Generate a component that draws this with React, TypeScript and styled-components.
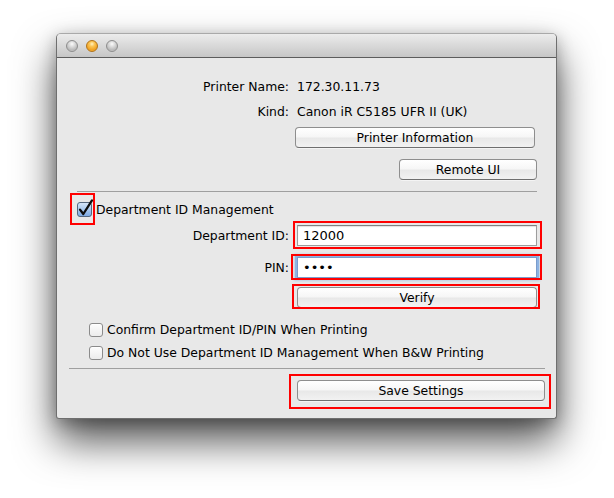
import React from 'react';
import styled, { createGlobalStyle, css } from 'styled-components';

const GlobalStyle = createGlobalStyle`
  html, body {
    margin: 0;
    background: #fff;
  }
  body {
    font-family: "DejaVu Sans", "Liberation Sans", sans-serif;
    font-size: 12.4px;
    color: #000;
  }
`;

const Page = styled.div`
  height: 498px;
  box-sizing: border-box;
  padding: 33px 0 0 56px;
  overflow: hidden;
`;

const Window = styled.div`
  width: 501px;
  height: 386px;
  box-sizing: border-box;
  border: 1px solid #6f6f6f;
  border-top-color: #a9a9a9;
  border-radius: 5px 5px 3px 3px;
  background: #e8e8e8;
  box-shadow: 0 22px 40px rgba(0, 0, 0, 0.68), 0 4px 16px rgba(0, 0, 0, 0.25);
  display: flex;
  flex-direction: column;
  overflow: hidden;
`;

const TitleBar = styled.div`
  height: 23px;
  flex: none;
  border-bottom: 1px solid #5c5c5c;
  background: linear-gradient(#ececec, #d9d9d9 50%, #c6c6c6);
  display: flex;
  align-items: center;
  gap: 8px;
  padding-left: 9px;
`;

const Light = styled.span<{ $color: 'gray' | 'orange' }>`
  width: 12px;
  height: 12px;
  border-radius: 50%;
  box-sizing: border-box;
  ${(p) =>
    p.$color === 'orange'
      ? css`
          border: 1px solid #b07218;
          background: radial-gradient(circle at 50% 30%, #fff2c4 0, #fbc555 30%, #f0a020 70%, #f7c45e 100%);
        `
      : css`
          border: 1px solid #8d8d8d;
          background: radial-gradient(circle at 50% 30%, #fbfbfb 0, #d9d9d9 35%, #b9b9b9 70%, #d8d8d8 100%);
        `}
`;

const Body = styled.div`
  padding: 16px 19px 0 20px;
  display: flex;
  flex-direction: column;
`;

const InfoRow = styled.div`
  display: grid;
  grid-template-columns: 212px 240px;
  column-gap: 8px;
  height: 25px;
  align-items: center;
`;

const FieldRow = styled.div<{ $top: number }>`
  display: grid;
  grid-template-columns: 212px 240px;
  column-gap: 8px;
  align-items: center;
  margin-top: ${(p) => p.$top}px;
`;

const Label = styled.span`
  text-align: right;
  white-space: nowrap;
`;

const Value = styled.span`
  white-space: nowrap;
`;

const Marked = styled.div<{ $inset: string }>`
  position: relative;
  display: flex;
  &::after {
    content: '';
    position: absolute;
    inset: ${(p) => p.$inset};
    border: 2px solid #f00;
    pointer-events: none;
  }
`;

const AquaButton = styled.button<{ $width: number }>`
  width: ${(p) => p.$width}px;
  height: 21px;
  padding: 0;
  border: 1px solid #8e8e8e;
  border-bottom-color: #6f6f6f;
  border-radius: 4px;
  background: linear-gradient(#ffffff, #f6f6f6 48%, #e8e8e8 52%, #f2f2f2);
  box-shadow: 0 1px 0 rgba(255, 255, 255, 0.5);
  font: inherit;
  color: #000;
  cursor: default;
`;

const ButtonSlot = styled.div<{ $top: number; $left?: number; $right?: number; $end?: boolean }>`
  display: flex;
  margin-top: ${(p) => p.$top}px;
  margin-left: ${(p) => p.$left ?? 0}px;
  margin-right: ${(p) => p.$right ?? 0}px;
  align-self: ${(p) => (p.$end ? 'flex-end' : 'flex-start')};
`;

const TextField = styled.input<{ $focused?: boolean }>`
  width: 240px;
  height: 21px;
  box-sizing: border-box;
  margin: 0;
  padding: 0 5px;
  border: 1px solid #9d9d9d;
  border-top-color: #808080;
  background: #fff;
  box-shadow: inset 0 1px 1px rgba(0, 0, 0, 0.12);
  font: inherit;
  font-size: 13px;
  color: #000;
  outline: none;
  ${(p) =>
    p.$focused &&
    css`
      border-color: #7b9ccb;
      box-shadow: 0 0 0 2px #8db3e2, 0 0 2px 3px rgba(120, 165, 220, 0.4);
    `}
`;

const Separator = styled.div<{ $top: number; $bleed?: number }>`
  height: 1px;
  background: #9f9f9f;
  margin: ${(p) => p.$top}px ${(p) => -(p.$bleed ?? 0)}px 0;
`;

const CheckRow = styled.label<{ $top: number; $indent?: number }>`
  display: flex;
  align-items: center;
  gap: 4px;
  height: 15px;
  margin-top: ${(p) => p.$top}px;
  margin-left: ${(p) => p.$indent ?? 0}px;
  white-space: nowrap;
`;

const BoxSlot = styled.span`
  display: flex;
  width: 15px;
  height: 15px;
`;

const CheckedBox = () => (
  <svg width="15" height="15" viewBox="0 0 15 15" style={{ overflow: 'visible' }}>
    <defs>
      <linearGradient id="cbBlue" x1="0" y1="0" x2="0" y2="1">
        <stop offset="0" stopColor="#d9e7f9" />
        <stop offset="0.5" stopColor="#a9c8ee" />
        <stop offset="1" stopColor="#7aa7e2" />
      </linearGradient>
    </defs>
    <rect x="0.5" y="0.5" width="14" height="14" rx="2.5" fill="url(#cbBlue)" stroke="#55677f" />
    <path
      d="M3 7.6 L6.3 12 L15 -1.6"
      fill="none"
      stroke="#0d0d0d"
      strokeWidth="2.3"
      strokeLinecap="round"
      strokeLinejoin="round"
    />
  </svg>
);

const EmptyBox = styled.span`
  width: 14px;
  height: 14px;
  box-sizing: border-box;
  border: 1px solid #8b8b8b;
  border-radius: 3px;
  background: linear-gradient(#fdfdfd, #ececec);
  box-shadow: inset 0 1px 0 #fff;
`;

export default function App() {
  return (
    <>
      <GlobalStyle />
      <Page>
        <Window>
          <TitleBar>
            <Light $color="gray" />
            <Light $color="orange" />
            <Light $color="gray" />
          </TitleBar>
          <Body>
            <InfoRow>
              <Label>Printer Name:</Label>
              <Value>172.30.11.73</Value>
            </InfoRow>
            <InfoRow>
              <Label>Kind:</Label>
              <Value>Canon iR C5185 UFR II (UK)</Value>
            </InfoRow>
            <ButtonSlot $top={3} $left={218}>
              <AquaButton $width={240}>Printer Information</AquaButton>
            </ButtonSlot>
            <ButtonSlot $top={11} $end>
              <AquaButton $width={138}>Remote UI</AquaButton>
            </ButtonSlot>
            <Separator $top={11} />
            <CheckRow $top={10}>
              <Marked $inset="-9px -3px -8px -7px">
                <BoxSlot>
                  <CheckedBox />
                </BoxSlot>
              </Marked>
              Department ID Management
            </CheckRow>
            <FieldRow $top={8}>
              <Label>Department ID:</Label>
              <Marked $inset="-4px -5px -3px -4px">
                <TextField readOnly defaultValue="12000" />
              </Marked>
            </FieldRow>
            <FieldRow $top={11}>
              <Label>PIN:</Label>
              <Marked $inset="-3px -5px -2px -6px">
                <TextField type="password" readOnly defaultValue="1234" $focused />
              </Marked>
            </FieldRow>
            <FieldRow $top={9}>
              <span />
              <Marked $inset="-3px -3px -1px -5px">
                <AquaButton $width={240}>Verify</AquaButton>
              </Marked>
            </FieldRow>
            <CheckRow $top={14} $indent={12}>
              <EmptyBox />
              Confirm Department ID/PIN When Printing
            </CheckRow>
            <CheckRow $top={8} $indent={12}>
              <EmptyBox />
              Do Not Use Department ID Management When B&amp;W Printing
            </CheckRow>
            <Separator $top={8} $bleed={8} />
            <ButtonSlot $top={11} $right={-8} $end>
              <Marked $inset="-6px -6px -8px -8px">
                <AquaButton $width={248}>Save Settings</AquaButton>
              </Marked>
            </ButtonSlot>
          </Body>
        </Window>
      </Page>
    </>
  );
}
